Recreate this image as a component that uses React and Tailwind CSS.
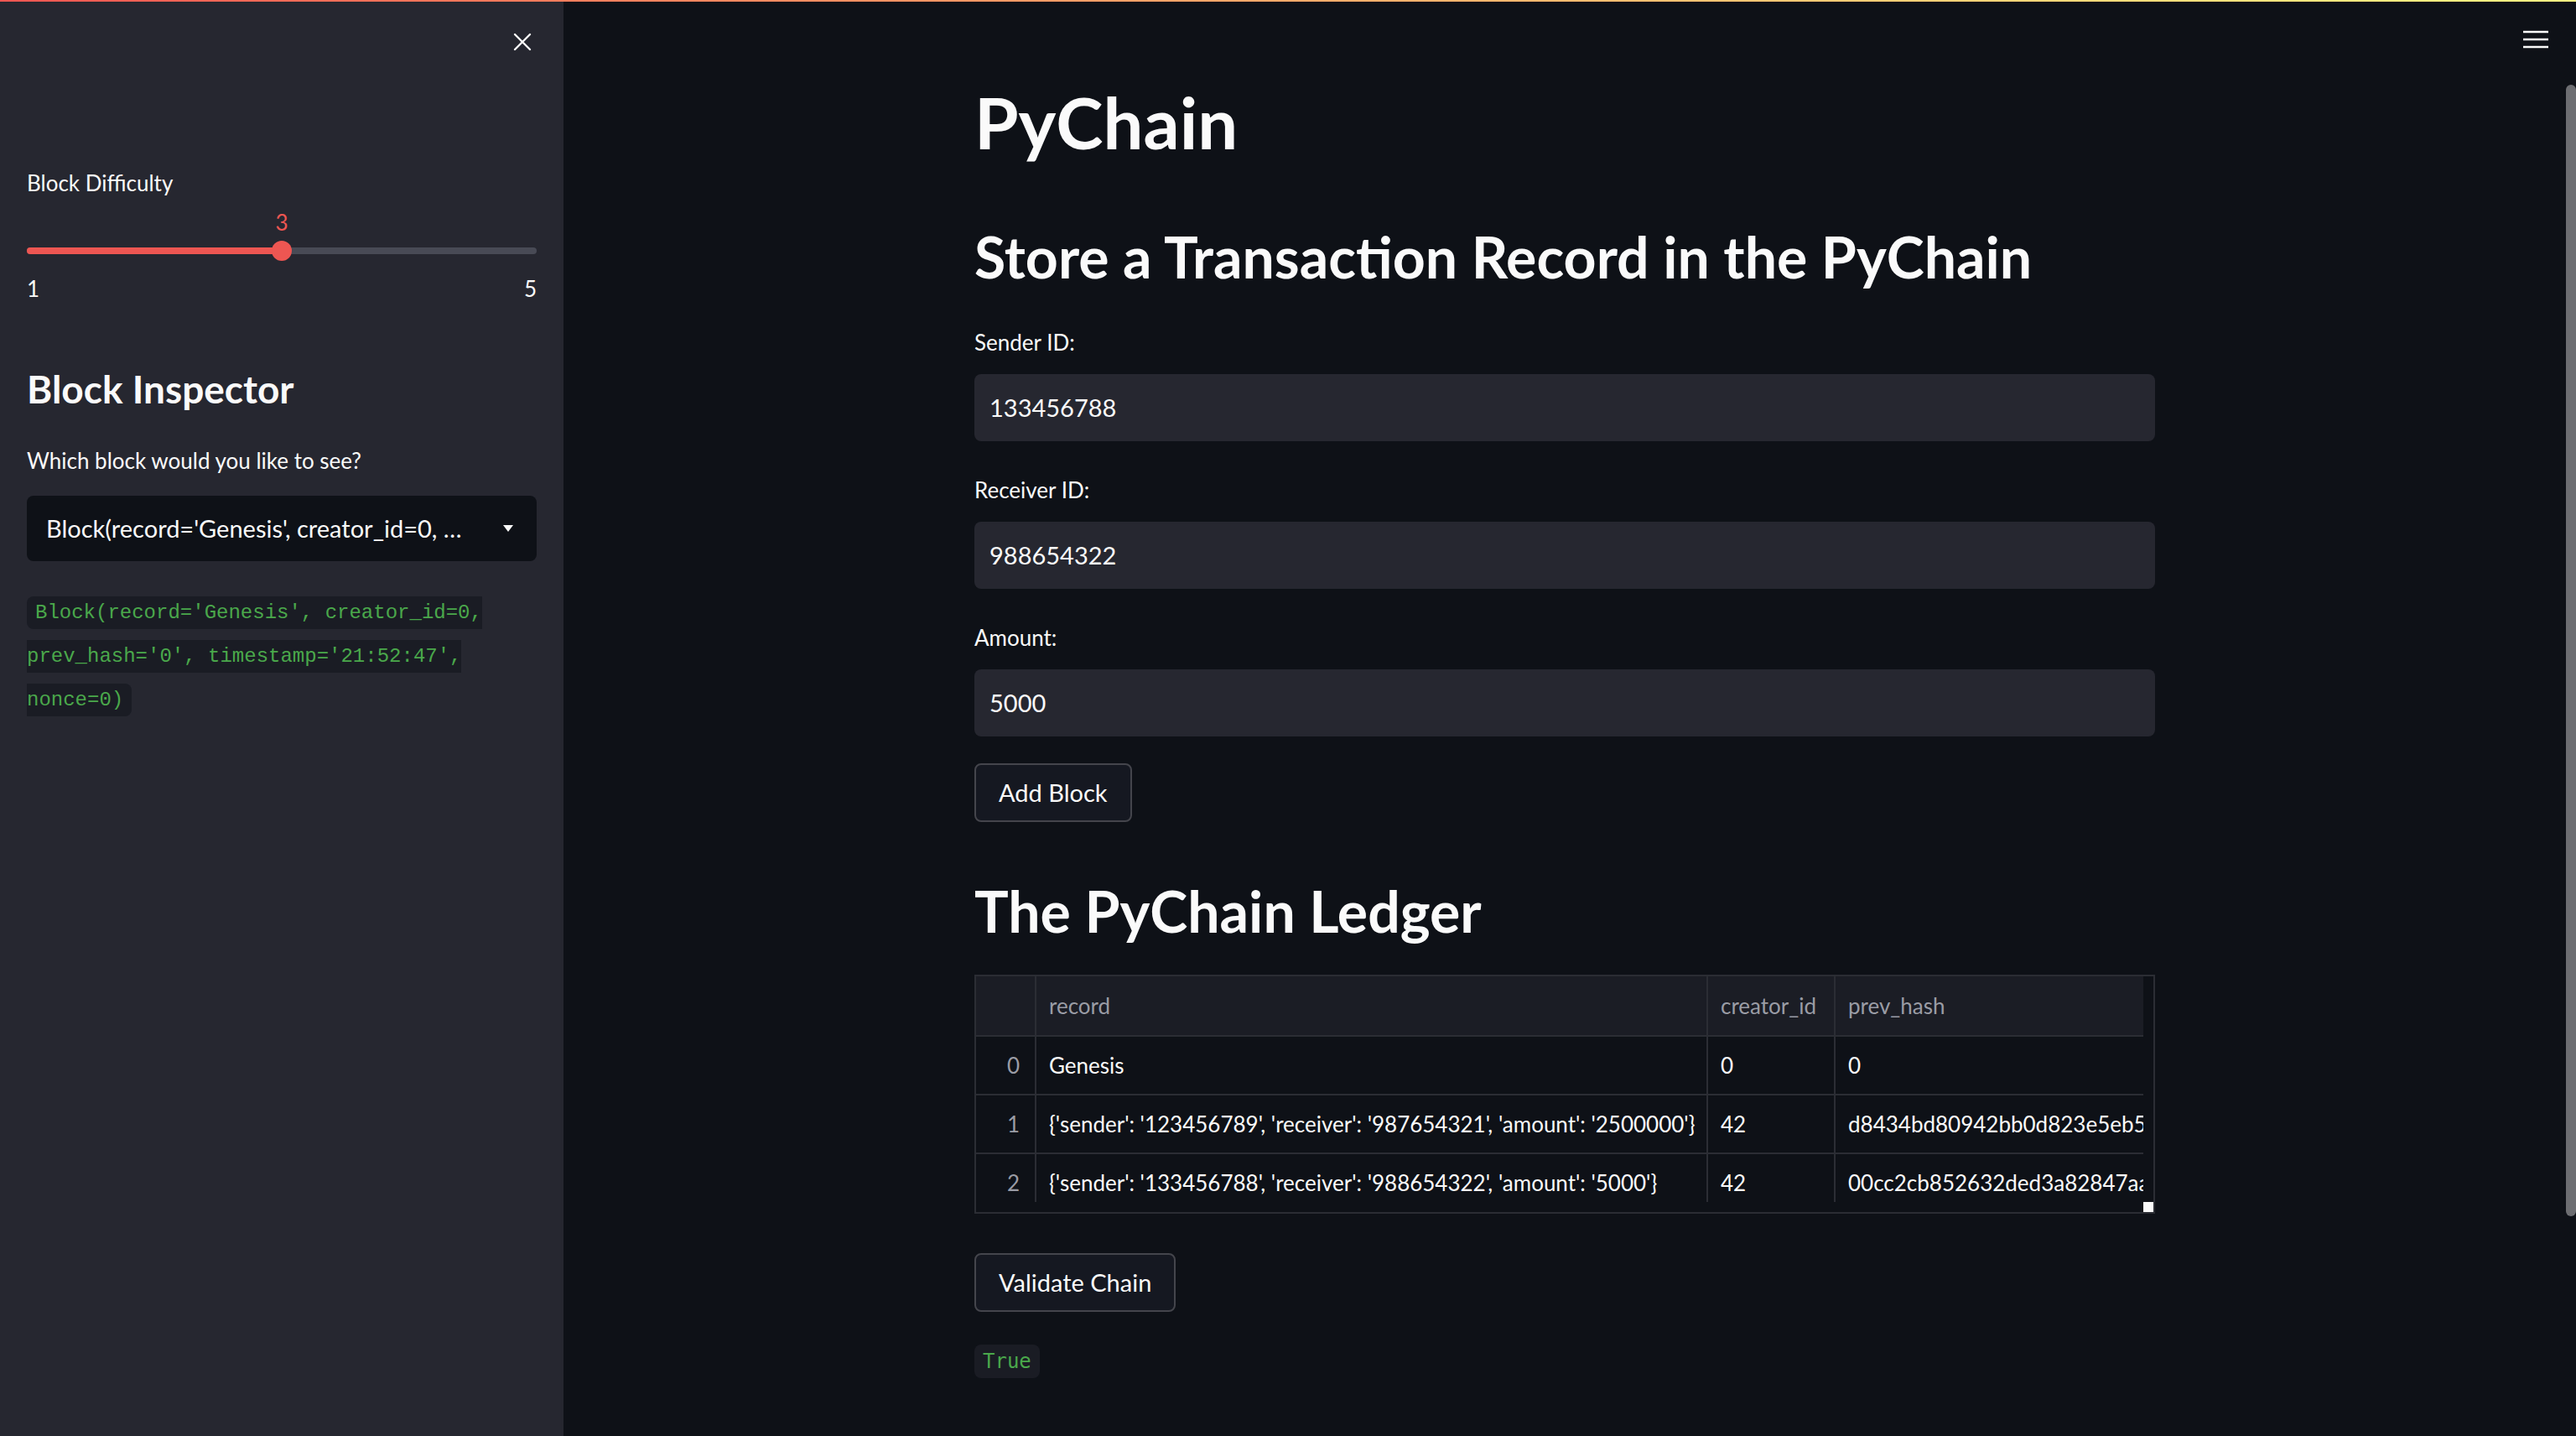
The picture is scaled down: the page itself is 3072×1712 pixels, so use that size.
import React from "react";

const sans = "font-['Lato','Noto_Sans',sans-serif]";
const mono = "font-['DejaVu_Sans_Mono','Liberation_Mono',monospace]";

const ledger = [
  { idx: 0, record: "Genesis", creator: "0", hash: "0" },
  {
    idx: 1,
    record: "{'sender': '123456789', 'receiver': '987654321', 'amount': '2500000'}",
    creator: "42",
    hash: "d8434bd80942bb0d823e5eb54c1f0a7d9b3e2c6f8a1d4e7b0c3f6a9d2e5b8c1f4",
  },
  {
    idx: 2,
    record: "{'sender': '133456788', 'receiver': '988654322', 'amount': '5000'}",
    creator: "42",
    hash: "00cc2cb852632ded3a82847aa7f3e1b9c0d4a6e2f8b5c7d1e3a9f0b2c4d6e8a0",
  },
];

function Field({ label, value, first }) {
  return (
    <div className={first ? "mt-[37px]" : "mt-[38px]"}>
      <div className="text-[26px] leading-[40px] text-[#fafafa]">{label}</div>
      <div className="mt-[18px] h-[80px] rounded-[8px] bg-[#262730] pl-[18px] flex items-center text-[29px] text-[#fafafa]">
        {value}
      </div>
    </div>
  );
}

function Button({ children, className }) {
  return (
    <button
      className={
        "h-[70px] px-[27px] rounded-[8px] border-2 border-[#44454c] bg-[#151821] text-[29px] text-[#fafafa] flex items-center " +
        className
      }
    >
      {children}
    </button>
  );
}

function Slider({ value, min, max }) {
  const pct = ((value - min) / (max - min)) * 100;
  return (
    <div>
      <div className="relative h-[40px] mt-[7px]">
        <span
          className="absolute top-0 -translate-x-1/2 text-[26px] leading-[40px] text-[#ed5652]"
          style={{ left: pct + "%" }}
        >
          {value}
        </span>
      </div>
      <div className="relative mt-[10px] h-[8px] rounded-full bg-[#484a55]">
        <div className="h-full rounded-full bg-[#ed5652]" style={{ width: pct + "%" }} />
        <div
          className="absolute top-1/2 w-[24px] h-[24px] -translate-x-1/2 -translate-y-1/2 rounded-full bg-[#ed5652]"
          style={{ left: pct + "%" }}
        />
      </div>
      <div className="mt-[21px] flex justify-between text-[26px] leading-[40px] text-[#fafafa]">
        <span>{min}</span>
        <span>{max}</span>
      </div>
    </div>
  );
}

function Ledger() {
  const cell = "h-full flex items-center border-r-2 border-[#2b2d34]";
  return (
    <div className="mt-[31px] h-[285px] border-2 border-[#2b2d34] flex flex-col text-[26px]">
      <div className="h-[269px] flex">
        <div className="w-[1392px] overflow-hidden">
          <div className="h-[72px] flex bg-[#1b1d25] border-b-2 border-[#2b2d34] text-[#9a9ca5]">
            <div className={cell + " w-[72px]"} />
            <div className={cell + " w-[801px] pl-[15px]"}>record</div>
            <div className={cell + " w-[152px] pl-[15px]"}>creator_id</div>
            <div className="h-full flex-1 flex items-center pl-[15px]">prev_hash</div>
          </div>
          {ledger.map((r) => (
            <div key={r.idx} className="h-[70px] flex border-b-2 border-[#2b2d34] text-[#fafafa]">
              <div className={cell + " w-[72px] justify-end pr-[18px] text-[#9a9ca5]"}>{r.idx}</div>
              <div className={cell + " w-[801px] pl-[15px] whitespace-nowrap overflow-hidden"}>{r.record}</div>
              <div className={cell + " w-[152px] pl-[15px]"}>{r.creator}</div>
              <div className="h-full flex-1 min-w-0 flex items-center pl-[15px] whitespace-nowrap overflow-hidden">
                {r.hash}
              </div>
            </div>
          ))}
        </div>
        <div className="flex-1" />
      </div>
      <div className="flex-1 flex justify-end">
        <div className="w-[12px] h-[12px] bg-[#fafafa]" />
      </div>
    </div>
  );
}

export default function App() {
  return (
    <div className={"relative w-full h-[1712px] flex overflow-hidden bg-[#0e1117] " + sans}>
      <div className="absolute top-0 left-0 right-0 h-[2px] bg-linear-to-r from-[#ed5652] to-[#fdf683] z-10" />

      {/* Sidebar */}
      <aside className="w-[672px] shrink-0 h-full bg-[#262730] px-[32px] pt-[38px]">
        <div className="flex justify-end mr-[5px]">
          <svg width="24" height="24" viewBox="0 0 24 24" fill="none" stroke="#fafafa" strokeWidth="2.4" strokeLinecap="round">
            <path d="M3 3L21 21M21 3L3 21" />
          </svg>
        </div>

        <div className="mt-[136px] text-[26px] leading-[40px] text-[#fafafa]">Block Difficulty</div>
        <Slider value={3} min={1} max={5} />

        <h2 className="mt-[70px] text-[46px] leading-[60px] font-bold text-[#fafafa]">Block Inspector</h2>
        <div className="mt-[35px] text-[26px] leading-[40px] text-[#fafafa]">Which block would you like to see?</div>
        <div className="mt-[22px] h-[78px] rounded-[8px] bg-[#0e1117] flex items-center pl-[23px] pr-[26px]">
          <span className="flex-1 min-w-0 truncate text-[29px] text-[#fafafa] pr-[46px]">
            Block(record='Genesis', creator_id=0, prev_hash='0', timestamp='21:52:47', nonce=0)
          </span>
          <svg width="16" height="8" viewBox="0 0 16 8" fill="#fafafa">
            <path d="M2 0H14L8 8Z" />
          </svg>
        </div>

        <p className={"mt-[35px] text-[24px] leading-[50px] " + mono}>
          <code className="bg-[#1a1c24] text-[#4aa84b] py-[6px] px-[10px] rounded-[8px] box-decoration-slice">
            Block(record='Genesis', creator_id=0, prev_hash='0', timestamp='21:52:47', nonce=0)
          </code>
        </p>
      </aside>

      {/* Main */}
      <main className="flex-1 h-full pr-[12px]">
        <div className="w-[1408px] mx-auto pt-[95px] text-[#fafafa]">
          <h1 className="text-[85px] leading-[100px] font-bold">PyChain</h1>
          <h2 className="mt-[66px] text-[68px] leading-[90px] font-bold">Store a Transaction Record in the PyChain</h2>

          <Field label="Sender ID:" value="133456788" first />
          <Field label="Receiver ID:" value="988654322" />
          <Field label="Amount:" value="5000" />

          <Button className="mt-[32px]">Add Block</Button>

          <h2 className="mt-[61px] text-[68px] leading-[90px] font-bold">The PyChain Ledger</h2>
          <Ledger />

          <Button className="mt-[47px]">Validate Chain</Button>

          <div className="mt-[39px] flex">
            <span className={"h-[40px] px-[10px] rounded-[8px] bg-[#1a1c24] text-[#4aa84b] text-[24px] flex items-center " + mono}>
              True
            </span>
          </div>
        </div>
      </main>

      {/* header menu + scrollbar overlays */}
      <svg className="absolute top-[36px] right-[33px]" width="30" height="22" viewBox="0 0 30 22" stroke="#fafafa" strokeWidth="2.6">
        <path d="M0 2H30M0 11H30M0 20H30" />
      </svg>
      <div className="absolute right-0 top-[101px] w-[12px] h-[1349px] rounded-full bg-[#6d6e72]" />
    </div>
  );
}
